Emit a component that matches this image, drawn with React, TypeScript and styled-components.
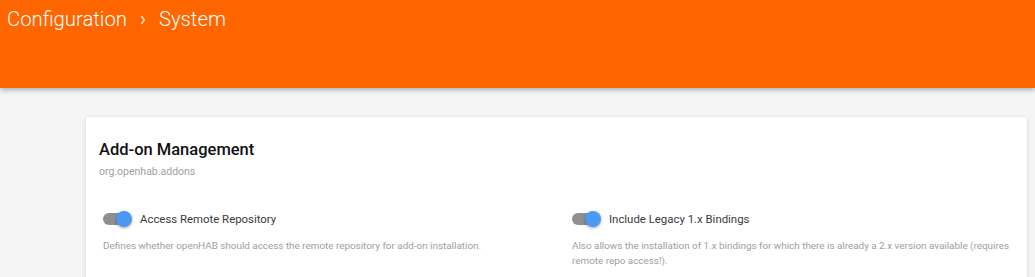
import React from 'react';
import styled, { createGlobalStyle } from 'styled-components';

const GlobalStyle = createGlobalStyle`
	html, body {
		margin: 0;
		padding: 0;
		background: #f5f5f5;
		font-family: Roboto, 'Liberation Sans', sans-serif;
	}
`;

const Header = styled.header`
	height: 88px;
	background: #ff6600;
	box-shadow: 0 2px 5px rgba(0, 0, 0, 0.3);
	padding: 6px 7px 0;
	box-sizing: border-box;
	position: relative;
	z-index: 1;
`;

const Breadcrumb = styled.h1`
	margin: 0;
	font-size: 20.3px;
	font-weight: 300;
	color: #fff;
	display: flex;
	align-items: center;
	gap: 13px;
	line-height: 24px;
`;

const Chevron = styled.span`
	font-size: 20px;
	font-weight: 400;
	color: #ffe8d8;
	margin-top: 1px;
`;

const Page = styled.main`
	padding: 29px 8px 0 86px;
`;

const Card = styled.section`
	background: #fff;
	border-radius: 2px;
	box-shadow: 0 1px 4px rgba(0, 0, 0, 0.15);
	padding: 23px 13px 16px;
`;

const Title = styled.h2`
	margin: 0;
	font-size: 16.5px;
	font-weight: 500;
	color: #111;
	line-height: 20px;
`;

const Pid = styled.div`
	margin-top: 5px;
	font-size: 10.5px;
	line-height: 13px;
	color: #a0a0a0;
`;

const Params = styled.div`
	display: grid;
	grid-template-columns: 469px 1fr;
	margin-top: 31px;
	padding-left: 4px;
`;

const Param = styled.div`
	display: flex;
	flex-direction: column;
`;

const ToggleRow = styled.label`
	display: flex;
	align-items: center;
	gap: 9px;
	height: 20px;
`;

const Track = styled.span`
	position: relative;
	width: 28px;
	height: 12px;
	border-radius: 6px;
	background: #8f8f8f;
	flex-shrink: 0;
`;

const Thumb = styled.span<{ $on: boolean }>`
	position: absolute;
	top: -2px;
	left: ${(p) => (p.$on ? '13px' : '-1px')};
	width: 16px;
	height: 16px;
	border-radius: 50%;
	background: #4a9af5;
	box-shadow: 0 1px 3px rgba(0, 0, 0, 0.35);
`;

const Label = styled.span`
	font-size: 11.4px;
	color: #3a3a3a;
`;

const Desc = styled.p`
	margin: 9px 0 0;
	font-size: 9.9px;
	line-height: 15px;
	color: #9e9e9e;
`;

const params = [
	{
		label: 'Access Remote Repository',
		desc: 'Defines whether openHAB should access the remote repository for add-on installation.',
		on: true,
	},
	{
		label: 'Include Legacy 1.x Bindings',
		desc: 'Also allows the installation of 1.x bindings for which there is already a 2.x version available (requires remote repo access!).',
		on: true,
	},
];

export default function App() {
	return (
		<>
			<GlobalStyle />
			<Header>
				<Breadcrumb>
					<span>Configuration</span>
					<Chevron>›</Chevron>
					<span>System</span>
				</Breadcrumb>
			</Header>
			<Page>
				<Card>
					<Title>Add-on Management</Title>
					<Pid>org.openhab.addons</Pid>
					<Params>
						{params.map((p) => (
							<Param key={p.label}>
								<ToggleRow>
									<Track>
										<Thumb $on={p.on} />
									</Track>
									<Label>{p.label}</Label>
								</ToggleRow>
								<Desc>{p.desc}</Desc>
							</Param>
						))}
					</Params>
				</Card>
			</Page>
		</>
	);
}
